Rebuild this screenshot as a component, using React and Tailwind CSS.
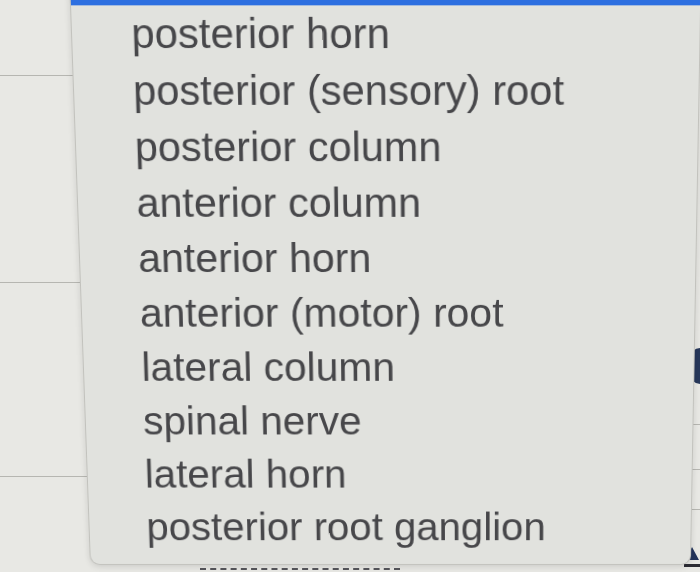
import React from 'react'

const options = [
  'posterior horn',
  'posterior (sensory) root',
  'posterior column',
  'anterior column',
  'anterior horn',
  'anterior (motor) root',
  'lateral column',
  'spinal nerve',
  'lateral horn',
  'posterior root ganglion',
]

const App = () => {
  return (
    <div className="relative w-[700px] h-[572px] overflow-hidden bg-[#e8e8e4] font-['Liberation_Sans',Arial,sans-serif]">
      {/* page behind the open select */}
      <div className="flex h-full">
        <div className="w-[100px] flex flex-col">
          <div className="h-[76px] border-b border-[#b6b6b1]"></div>
          <div className="h-[207px] border-b border-[#b6b6b1]"></div>
          <div className="h-[194px] border-b border-[#b6b6b1]"></div>
        </div>
        <div className="flex-1 flex flex-col">
          <div className="h-[568px] shrink-0"></div>
          <div className="ml-[100px] w-[200px] h-[4px] border-t-2 border-dashed border-[#55555a]"></div>
        </div>
        <div className="w-[16px] flex flex-col items-end">
          <div className="h-[348px]"></div>
          <div className="w-[10px] h-[36px] rounded-l-full bg-[#26375a]"></div>
          <div className="h-[41px] w-full border-b border-[#b6b6b1]"></div>
          <div className="h-[45px] w-full border-b border-[#b6b6b1]"></div>
          <div className="h-[40px] w-full border-b border-[#b6b6b1]"></div>
          <div className="h-[36px]"></div>
          <svg width="16" height="16" viewBox="0 0 16 16">
            <path d="M8 1 L15 14 L1 14 Z" fill="#22335a" />
          </svg>
          <div className="w-full h-[3px] bg-[#2b2b33] mt-[2px]"></div>
        </div>
      </div>

      {/* dropdown list */}
      <div className="absolute left-[80px] top-[-2px] w-[616px] h-[575px] flex flex-col bg-[#e1e2de] border border-t-0 border-[#c2c2bd] rounded-b-[10px] shadow-[0_2px_6px_rgba(0,0,0,0.12)] [transform:perspective(1000px)_rotateX(-5deg)_skewX(0.5deg)]">
        <div className="h-[13px] bg-[#2d6fe0] shrink-0"></div>
        {options.map((o) => (
          <div key={o} className="h-[55px] shrink-0 flex items-center pl-[58px] text-[41px] text-[#47474a] whitespace-nowrap">
            {o}
          </div>
        ))}
      </div>
    </div>
  )
}

export default App
